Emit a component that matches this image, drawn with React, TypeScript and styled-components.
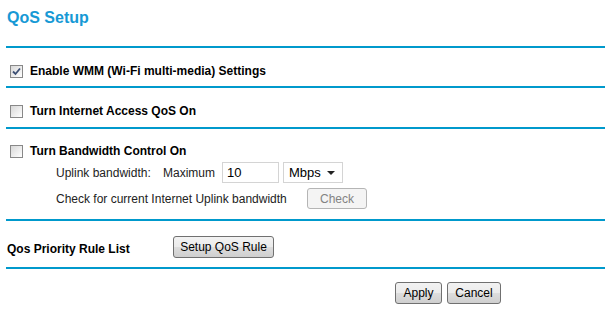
import React from "react";
import styled, { createGlobalStyle } from "styled-components";

const GlobalStyle = createGlobalStyle`
  html, body {
    margin: 0;
    padding: 0;
    background: #ffffff;
  }
  body {
    font-family: "Liberation Sans", Arial, sans-serif;
    font-size: 12px;
    color: #000;
  }
`;

const Page = styled.div`
  width: 605px;
  padding-left: 6px;
  box-sizing: border-box;
`;

const Title = styled.h1`
  margin: 9px 0 19px 1px;
  font-size: 16px;
  line-height: 18px;
  font-weight: bold;
  color: #1799d5;
`;

const Section = styled.div<{ $top: number; $bottom: number }>`
  border-top: 2px solid #0099cc;
  padding: ${(p) => p.$top}px 0 ${(p) => p.$bottom}px;
  display: flex;
  flex-direction: column;
`;

const CheckRow = styled.label`
  display: flex;
  align-items: center;
  gap: 7px;
  height: 16px;
  padding-left: 4px;
  font-weight: bold;
  line-height: 16px;
`;

const Box = styled.span`
  width: 13px;
  height: 13px;
  box-sizing: border-box;
  border: 1px solid #888888;
  background: linear-gradient(135deg, #d8d8d8 0%, #f3f3f3 70%, #ffffff 100%);
  display: flex;
  align-items: center;
  justify-content: center;
  flex-shrink: 0;
`;

const SubRow = styled.div<{ $mt: number }>`
  display: flex;
  align-items: center;
  margin-top: ${(p) => p.$mt}px;
  padding-left: 50px;
  height: 21px;
  color: #222;
`;

const SubLabel = styled.span<{ $w: number }>`
  width: ${(p) => p.$w}px;
  flex-shrink: 0;
`;

const TextInput = styled.div`
  width: 57px;
  height: 21px;
  box-sizing: border-box;
  border: 1px solid #d4d4d4;
  margin-left: 7px;
  padding: 0 0 0 4px;
  font-size: 13px;
  line-height: 19px;
  color: #000;
`;

const Select = styled.div`
  width: 60px;
  height: 21px;
  box-sizing: border-box;
  border: 1px solid #d4d4d4;
  margin-left: 4px;
  padding: 0 7px 0 5px;
  display: flex;
  align-items: center;
  justify-content: space-between;
  font-size: 13px;
  color: #000;
`;

const Arrow = styled.span`
  width: 0;
  height: 0;
  border-left: 4px solid transparent;
  border-right: 4px solid transparent;
  border-top: 4px solid #222;
`;

const Button = styled.button<{ $disabled?: boolean; $h?: number; $w: number }>`
  height: ${(p) => p.$h ?? 22}px;
  width: ${(p) => p.$w}px;
  padding: 0;
  box-sizing: border-box;
  white-space: nowrap;
  border: 1px solid ${(p) => (p.$disabled ? "#b5b5b5" : "#707070")};
  border-radius: 3px;
  background: ${(p) =>
    p.$disabled
      ? "#f4f4f4"
      : "linear-gradient(to bottom, #f2f2f2 0%, #ebebeb 50%, #dddddd 51%, #cfcfcf 100%)"};
  color: ${(p) => (p.$disabled ? "#838383" : "#000")};
  font-family: "Liberation Sans", Arial, sans-serif;
  font-size: 12px;
  flex-shrink: 0;
`;

const RuleRow = styled.div`
  display: flex;
  align-items: center;
  padding-left: 1px;
  height: 22px;
`;

const RuleLabel = styled.span`
  width: 166px;
  font-weight: bold;
  padding-top: 3px;
`;

const Footer = styled.div`
  border-top: 2px solid #0099cc;
  padding: 13px 104px 0 0;
  display: flex;
  justify-content: flex-end;
  gap: 5px;
`;

const CheckMark = () => (
  <svg width="9" height="9" viewBox="0 0 9 9">
    <path d="M1 4.5 L3.5 7 L8 1.5" fill="none" stroke="#3c4f74" strokeWidth="1.8" />
  </svg>
);

const App: React.FC = () => {
  return (
    <Page>
      <GlobalStyle />
      <Title>QoS Setup</Title>
      <Section $top={15} $bottom={7}>
        <CheckRow>
          <Box>
            <CheckMark />
          </Box>
          Enable WMM (Wi-Fi multi-media) Settings
        </CheckRow>
      </Section>
      <Section $top={15} $bottom={8}>
        <CheckRow>
          <Box />
          Turn Internet Access QoS On
        </CheckRow>
      </Section>
      <Section $top={14} $bottom={10}>
        <CheckRow>
          <Box />
          Turn Bandwidth Control On
        </CheckRow>
        <SubRow $mt={3}>
          <SubLabel $w={107}>Uplink bandwidth:</SubLabel>
          <span>Maximum</span>
          <TextInput>10</TextInput>
          <Select>
            Mbps
            <Arrow />
          </Select>
        </SubRow>
        <SubRow $mt={5}>
          <SubLabel $w={251}>Check for current Internet Uplink bandwidth</SubLabel>
          <Button $disabled $h={21} $w={60}>
            Check
          </Button>
        </SubRow>
      </Section>
      <Section $top={15} $bottom={9}>
        <RuleRow>
          <RuleLabel>Qos Priority Rule List</RuleLabel>
          <Button $w={101}>Setup QoS Rule</Button>
        </RuleRow>
      </Section>
      <Footer>
        <Button $w={47}>Apply</Button>
        <Button $w={54}>Cancel</Button>
      </Footer>
    </Page>
  );
};

export default App;
